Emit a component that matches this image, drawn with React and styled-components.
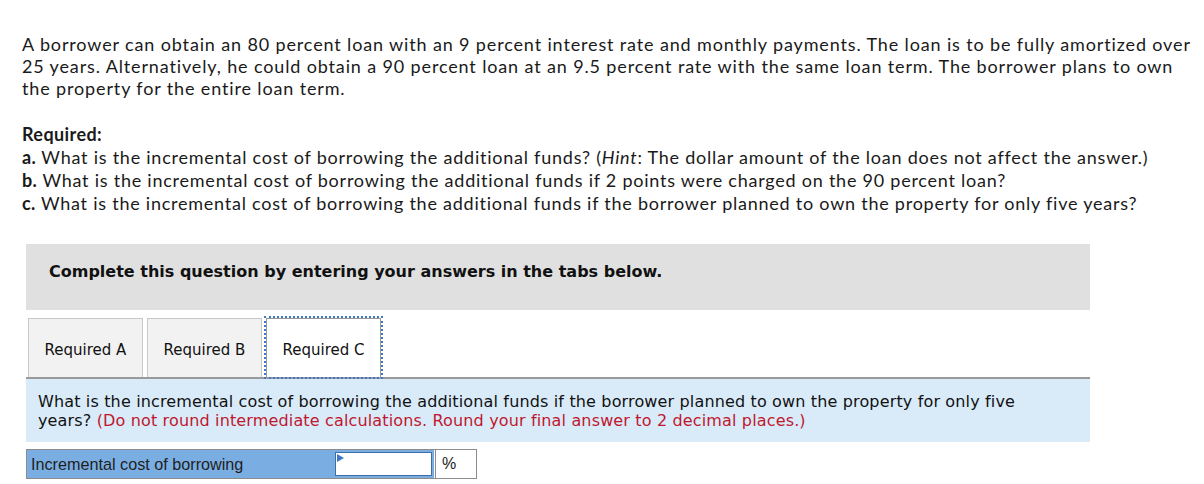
import React from "react";
import styled, { createGlobalStyle } from "styled-components";

const Global = createGlobalStyle`
  html, body { margin: 0; padding: 0; background: #fff; }
  body { font-family: "Lato", "Open Sans", sans-serif; color: #1a1a1a; }
`;

const Page = styled.div`
  padding: 33px 0 0 22px;
  width: 1182px;
`;

const Intro = styled.p`
  margin: 0;
  font-size: 18px;
  line-height: 22px;
  letter-spacing: 0.86px;
  white-space: nowrap;
`;

const Required = styled.div`
  margin-top: 24px;
  font-size: 18px;
  line-height: 23px;
  letter-spacing: 0.76px;
  white-space: nowrap;
  b { font-weight: 700; letter-spacing: 0.4px; }
`;

const Tabs = styled.div`
  margin: 29px 0 0 4px;
  width: 1064px;
  font-family: "DejaVu Sans", Verdana, sans-serif;
`;

const Banner = styled.div`
  background: #e0e0e0;
  height: 66px;
  box-sizing: border-box;
  padding: 18px 0 0 23px;
  font-weight: 700;
  font-size: 16px;
  line-height: 19px;
  color: #111;
`;

const TabRow = styled.div`
  display: flex;
  gap: 4px;
  margin-top: 8px;
  padding-left: 2px;
  border-bottom: 2px solid #9a9a9a;
`;

const Tab = styled.div`
  width: 115px;
  height: 59px;
  box-sizing: border-box;
  padding-top: 3px;
  display: flex;
  align-items: center;
  justify-content: center;
  font-size: 15px;
  color: #111;
  background: ${(p) => (p.$active ? "#fff" : "#f2f2f2")};
  border: 1px solid ${(p) => (p.$active ? "#9a9a9a" : "#c8c8c8")};
  border-bottom: none;
  outline: ${(p) => (p.$active ? "2px dotted #3f78c4" : "none")};
  outline-offset: 0px;
`;

const Question = styled.div`
  background: #d9ebf9;
  padding: 13px 12px 12px 12px;
  font-size: 16px;
  line-height: 19px;
  letter-spacing: 0.15px;
  color: #111;
  span { color: #c0172e; }
`;

const AnswerRow = styled.div`
  display: flex;
  margin: 7px 0 0 0;
  width: 451px;
  height: 30px;
  box-sizing: border-box;
  border: 1px solid #8c8c8c;
  font-family: "Liberation Sans", Arial, sans-serif;
`;

const Label = styled.div`
  flex: 0 0 306px;
  background: #7aaee2;
  display: flex;
  align-items: center;
  padding-left: 4px;
  box-sizing: border-box;
  font-size: 16.2px;
  color: #1f1f1f;
`;

const InputWrap = styled.div`
  position: relative;
  flex: 0 0 101px;
  background: #fff;
  border: 2px solid #7aaee2;
  box-sizing: border-box;
  input {
    display: block;
    width: 100%;
    height: 100%;
    border: 1px solid #3f6fa8;
    box-sizing: border-box;
    outline: none;
  }
`;

const Flag = styled.span`
  position: absolute;
  left: 2px;
  top: 2px;
  width: 0;
  height: 0;
  border-top: 4px solid transparent;
  border-bottom: 4px solid transparent;
  border-left: 7px solid #3f78c4;
`;

const Unit = styled.div`
  flex: 0 0 42px;
  box-sizing: border-box;
  border-left: 1px solid #8c8c8c;
  margin-left: 1px;
  display: flex;
  align-items: center;
  padding-left: 6px;
  font-size: 16px;
  color: #222;
`;

export default function App() {
  return (
    <Page>
      <Global />
      <Intro>
        A borrower can obtain an 80 percent loan with an 9 percent interest rate and monthly payments. The loan is to be fully amortized over
        <br />
        25 years. Alternatively, he could obtain a 90 percent loan at an 9.5 percent rate with the same loan term. The borrower plans to own
        <br />
        the property for the entire loan term.
      </Intro>
      <Required>
        <b>Required:</b>
        <br />
        <b>a.</b> What is the incremental cost of borrowing the additional funds? (<i>Hint</i>: The dollar amount of the loan does not affect the answer.)
        <br />
        <b>b.</b> What is the incremental cost of borrowing the additional funds if 2 points were charged on the 90 percent loan?
        <br />
        <b>c.</b> What is the incremental cost of borrowing the additional funds if the borrower planned to own the property for only five years?
      </Required>
      <Tabs>
        <Banner>Complete this question by entering your answers in the tabs below.</Banner>
        <TabRow>
          <Tab>Required A</Tab>
          <Tab>Required B</Tab>
          <Tab $active>Required C</Tab>
        </TabRow>
        <Question>
          What is the incremental cost of borrowing the additional funds if the borrower planned to own the property for only five
          <br />
          years? <span>(Do not round intermediate calculations. Round your final answer to 2 decimal places.)</span>
        </Question>
        <AnswerRow>
          <Label>Incremental cost of borrowing</Label>
          <InputWrap>
            <input type="text" aria-label="Incremental cost of borrowing" />
            <Flag />
          </InputWrap>
          <Unit>%</Unit>
        </AnswerRow>
      </Tabs>
    </Page>
  );
}
